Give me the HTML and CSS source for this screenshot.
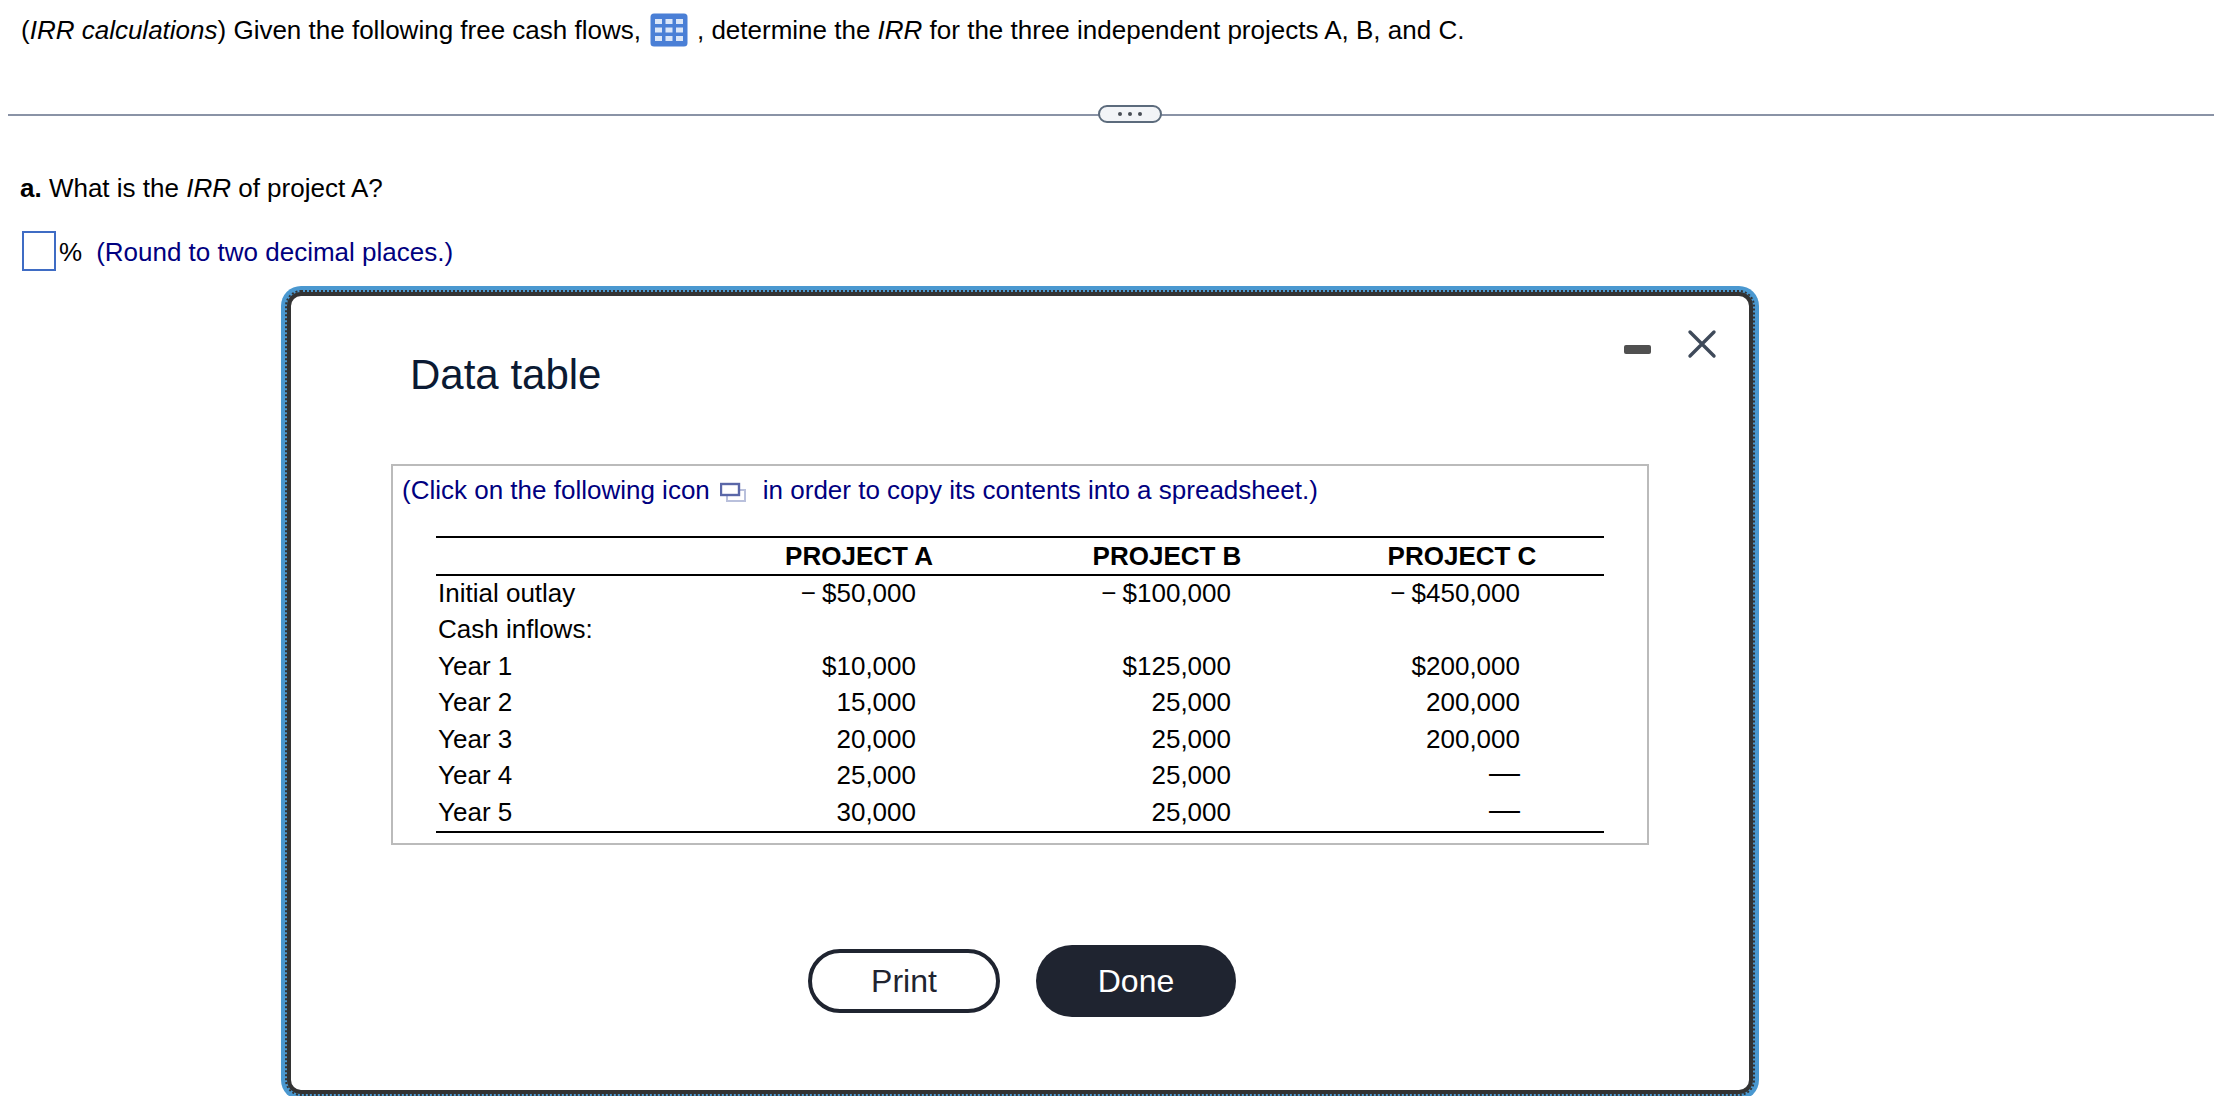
FILE: index.html
```html
<!DOCTYPE html>
<html lang="en">
<head>
<meta charset="utf-8">
<title>IRR calculations</title>
<link rel="stylesheet" href="styles.css">
</head>
<body>
<main class="question">
  <p class="intro">(<i>IRR calculations</i>) Given the following free cash flows,<svg class="table-icon" viewBox="0 0 38 34" aria-hidden="true">
      <rect x="0.5" y="0.5" width="37" height="33" rx="3.5" fill="#4a7fd6"/>
      <g fill="#dbe6f8">
        <rect x="5" y="6" width="7" height="5"/><rect x="15.5" y="6" width="7" height="5"/><rect x="26" y="6" width="7" height="5"/>
        <rect x="5" y="14.5" width="7" height="5"/><rect x="15.5" y="14.5" width="7" height="5"/><rect x="26" y="14.5" width="7" height="5"/>
        <rect x="5" y="23" width="7" height="5"/><rect x="15.5" y="23" width="7" height="5"/><rect x="26" y="23" width="7" height="5"/>
      </g>
    </svg>, determine the <i>IRR</i> for the three independent projects A, B, and C.</p>
  <div class="divider">
    <span class="more"><span class="dot"></span><span class="dot"></span><span class="dot"></span></span>
  </div>
  <p class="part"><b>a.</b> What is the <i>IRR</i> of project A?</p>
  <div class="answer">
    <span class="answer-box"></span>
    <span class="percent">%</span>
    <span class="hint">(Round to two decimal places.)</span>
  </div>
</main>

<section class="modal" aria-label="Data table">
  <div class="modal-dots">
    <div class="modal-inner">
      <div class="window-controls">
        <span class="minimize"></span>
        <svg class="close" viewBox="0 0 30 30" aria-hidden="true">
          <path d="M3 3 L27 27 M27 3 L3 27" stroke="#3f4a5a" stroke-width="3.4" stroke-linecap="round" fill="none"/>
        </svg>
      </div>
      <h1 class="modal-title">Data table</h1>
      <div class="data-box">
        <p class="copy-note">(Click on the following icon<svg class="copy-icon" viewBox="0 0 26 20" aria-hidden="true">
            <rect x="7" y="8" width="18" height="11" fill="none" stroke="#b9c0dc" stroke-width="2"/>
            <rect x="1" y="2" width="18" height="11" fill="#fff" stroke="#5a67a8" stroke-width="2.4"/>
          </svg>in order to copy its contents into a spreadsheet.)</p>
        <table class="cash-table">
          <colgroup>
            <col class="col-label"><col class="col-a"><col class="col-b"><col class="col-c">
          </colgroup>
          <thead>
            <tr><th></th><th>PROJECT A</th><th class="head-b">PROJECT B</th><th class="head-c">PROJECT C</th></tr>
          </thead>
          <tbody>
            <tr><td>Initial outlay</td><td class="num a"><span class="minus">−</span>$50,000</td><td class="num b"><span class="minus">−</span>$100,000</td><td class="num c"><span class="minus">−</span>$450,000</td></tr>
            <tr><td>Cash inflows:</td><td class="num a"></td><td class="num b"></td><td class="num c"></td></tr>
            <tr><td>Year 1</td><td class="num a">$10,000</td><td class="num b">$125,000</td><td class="num c">$200,000</td></tr>
            <tr><td>Year 2</td><td class="num a">15,000</td><td class="num b">25,000</td><td class="num c">200,000</td></tr>
            <tr><td>Year 3</td><td class="num a">20,000</td><td class="num b">25,000</td><td class="num c">200,000</td></tr>
            <tr><td>Year 4</td><td class="num a">25,000</td><td class="num b">25,000</td><td class="num c"><span class="dash">—</span></td></tr>
            <tr><td>Year 5</td><td class="num a">30,000</td><td class="num b">25,000</td><td class="num c"><span class="dash">—</span></td></tr>
          </tbody>
        </table>
      </div>
      <div class="actions">
        <button class="btn btn-print" type="button">Print</button>
        <button class="btn btn-done" type="button">Done</button>
      </div>
    </div>
  </div>
</section>
</body>
</html>
```
FILE: styles.css
```css
* { box-sizing: border-box; }
html, body { margin: 0; height: 100%; overflow: hidden; background: #fff; }
body { font-family: "Liberation Sans", Arial, sans-serif; font-size: 26px; color: #000; }
p { margin: 0; }

.question { display: flex; flex-direction: column; }
.intro { height: 34px; line-height: 34px; margin: 13px 0 0 21px; white-space: nowrap; }
.table-icon { width: 38px; height: 34px; margin: 0 9px 0 9px; vertical-align: top; }

.divider { position: relative; height: 2px; margin: 67px 0 0 8px; background: #8a93a6; }
.more { position: absolute; left: 1090px; top: -9px; width: 64px; height: 18px; display: flex; align-items: center; justify-content: center; gap: 6px; background: #f2f4f7; border: 2px solid #5c6b7c; border-radius: 9px; }
.dot { width: 4px; height: 4px; border-radius: 50%; background: #4a4f57; }

.part { margin: 57px 0 0 20px; line-height: 30px; }
.answer { display: flex; align-items: center; margin: 28px 0 0 22px; }
.answer-box { width: 34px; height: 40px; border: 2px solid #3f6cc4; background: #fff; }
.percent { margin-left: 3px; padding-top: 2px; }
.hint { margin-left: 14px; padding-top: 2px; color: #000080; }

.modal { position: absolute; left: 281px; top: 286px; width: 1478px; height: 814px; padding: 4px; background: #4a98d0; border-radius: 20px; }
.modal-dots { height: 100%; border: 2px dotted #333; border-radius: 16px; }
.modal-inner { position: relative; height: 100%; padding: 0 0 0 119px; background: #fff; border: 4px solid #333; border-radius: 14px; display: flex; flex-direction: column; }

.window-controls { position: absolute; right: 32px; top: 33px; display: flex; align-items: center; gap: 36px; }
.minimize { width: 27px; height: 9px; margin-top: 10px; background: #505050; border-radius: 2px; }
.close { width: 30px; height: 30px; }

.modal-title { margin: 55px 0 0 0; font-size: 42px; line-height: 48px; font-weight: 400; color: #0b1a33; }
.data-box { width: 1258px; height: 381px; margin: 65px 0 0 -19px; padding: 0 0 0 43px; border: 2px solid #bbb; }
.copy-note { height: 36px; line-height: 36px; margin: 6px 0 0 -34px; color: #000080; white-space: nowrap; }
.copy-icon { width: 26px; height: 20px; margin: 0 17px 0 10px; vertical-align: -3px; }

.cash-table { width: 1168px; margin-top: 28px; border-collapse: collapse; table-layout: fixed; border-top: 2px solid #000; border-bottom: 2px solid #000; }
.col-label { width: 276px; }
.col-a { width: 294px; }
.col-b { width: 318px; }
.col-c { width: 280px; }
.cash-table th { height: 38px; padding: 0; font-weight: 700; text-align: center; border-bottom: 2px solid #000; }
.cash-table th.head-b { padding-left: 4px; }
.cash-table th.head-c { padding-right: 4px; }
.cash-table td { height: 36.5px; padding: 0 0 1px 2px; line-height: 35px; }
.cash-table td.num { padding: 0 0 1px 0; text-align: right; }
.cash-table td.a { padding-right: 90px; }
.cash-table td.b { padding-right: 93px; }
.cash-table td.c { padding-right: 84px; }
.minus { margin-right: 6px; }
.dash { display: inline-block; font-size: 31px; line-height: 30px; vertical-align: top; }

.actions { display: flex; align-items: center; gap: 36px; margin: 100px 0 0 398px; }
.btn { font-family: inherit; font-size: 32px; border-radius: 40px; padding: 0; cursor: pointer; }
.btn-print { width: 192px; height: 64px; background: #fff; color: #1f2430; border: 4px solid #1f2430; }
.btn-done { width: 200px; height: 72px; background: #1f2430; color: #fff; border: 0; }
```
